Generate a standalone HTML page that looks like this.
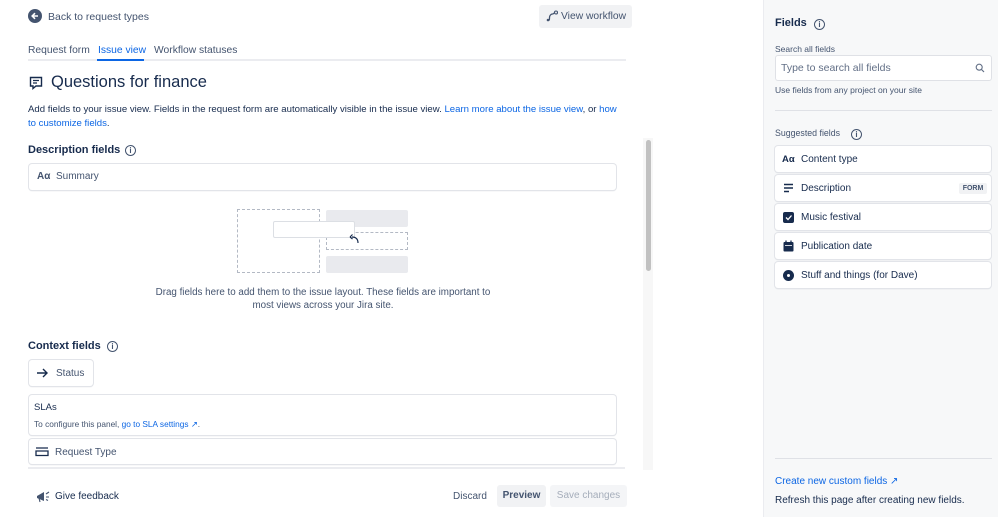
<!DOCTYPE html>
<html><head><meta charset="utf-8"><style>
*{box-sizing:border-box;margin:0;padding:0}
body{width:998px;height:517px;overflow:hidden;background:#fff;font-family:"Liberation Sans",sans-serif;color:#172b4d;position:relative;font-size:11px}
.a{position:absolute;white-space:nowrap}
.link{color:#0c66e4}
.card{position:absolute;background:#fff;border-radius:3px;box-shadow:0 0 0 1px #e2e4e9,0 1px 1px rgba(9,30,66,.2)}
.info{display:inline-block;width:11px;height:11px;border:1.2px solid #44546f;border-radius:50%;font-size:8px;text-align:center;line-height:9px;color:#44546f;font-weight:bold;vertical-align:middle}
</style></head><body>
<!-- header -->
<div class="a" style="left:28px;top:9px;width:14px;height:14px;border-radius:50%;background:#44546f"></div>
<svg class="a" style="left:30px;top:11px" width="10" height="10" viewBox="0 0 10 10"><path d="M8 5H2.5M5 2.2 2.2 5 5 7.8" stroke="#fff" stroke-width="1.6" fill="none"/></svg>
<div class="a" style="left:48px;top:11px;font-size:10.5px;color:#44546f">Back to request types</div>
<div class="a" style="left:539px;top:5px;width:93px;height:23px;background:#f1f2f4;border-radius:3px"></div>
<svg class="a" style="left:546px;top:10px" width="12" height="12" viewBox="0 0 12 12"><path d="M2 10.5c1.5 0 1.5-1 1.5-3S5 4 6.5 4 8 2.5 9 2.5" stroke="#44546f" stroke-width="1.3" fill="none"/><circle cx="2" cy="10" r="1.3" fill="#44546f"/><circle cx="10" cy="2.5" r="1.5" fill="none" stroke="#44546f" stroke-width="1.1"/></svg>
<div class="a" style="left:561px;top:11px;font-size:10.3px;color:#44546f">View workflow</div>
<!-- tabs -->
<div class="a" style="left:28px;top:45px;font-size:10.3px;color:#44546f">Request form</div>
<div class="a" style="left:98px;top:45px;font-size:10.3px;color:#0c66e4">Issue view</div>
<div class="a" style="left:154px;top:45px;font-size:10.3px;color:#44546f">Workflow statuses</div>
<div class="a" style="left:28px;top:59px;width:598px;height:2px;background:#ebecf0"></div>
<div class="a" style="left:97px;top:59px;width:47px;height:2px;background:#0c66e4"></div>
<!-- title -->
<svg class="a" style="left:29px;top:76px" width="14" height="14" viewBox="0 0 14 14"><path d="M1.5 1.5h11v8.5H7l-3 2.5V10H1.5z" stroke="#172b4d" stroke-width="1.4" fill="none"/><path d="M4 4.5h6M4 7h4" stroke="#172b4d" stroke-width="1.3"/></svg>
<div class="a" style="left:51px;top:73px;font-size:16.5px;color:#172b4d">Questions for finance</div>
<div class="a" style="left:28px;top:103px;width:597px;white-space:normal;font-size:9.6px;line-height:13.5px;color:#172b4d">Add fields to your issue view. Fields in the request form are automatically visible in the issue view. <span class="link">Learn more about the issue view</span>, or <span class="link">how to customize fields</span>.</div>
<!-- description -->
<div class="a" style="left:28px;top:144px;font-size:11px;font-weight:bold">Description fields</div>
<div class="a" style="left:125px;top:144px"><span class="info">i</span></div>
<div class="card" style="left:29px;top:164px;width:587px;height:26px"></div>
<div class="a" style="left:37px;top:171px;font-size:10px;font-weight:bold;color:#44546f">Aα</div>
<div class="a" style="left:56px;top:171px;font-size:10px;color:#44546f">Summary</div>
<!-- illustration -->
<div class="a" style="left:237px;top:209px;width:83px;height:64px;border:1px dashed #b3b9c4"></div>
<div class="a" style="left:326px;top:210px;width:82px;height:17px;background:#e9eaee;border-radius:2px"></div>
<div class="a" style="left:326px;top:232px;width:82px;height:18px;border:1px dashed #b3b9c4"></div>
<div class="a" style="left:326px;top:256px;width:82px;height:17px;background:#e9eaee;border-radius:2px"></div>
<div class="a" style="left:273px;top:221px;width:82px;height:17px;background:#fff;border:1px solid #dcdfe4;border-radius:2px"></div>
<svg class="a" style="left:347px;top:231px" width="14" height="14" viewBox="0 0 14 14"><path d="M11 12c0-4-2-6-6-6M3 6l2.5-2.5M3 6l2.5 2" stroke="#172b4d" stroke-width="1.2" fill="none"/></svg>
<div class="a" style="left:150px;top:286px;width:346px;white-space:normal;text-align:center;font-size:9.8px;line-height:13px;color:#44546f">Drag fields here to add them to the issue layout. These fields are important to most views across your Jira site.</div>
<!-- context -->
<div class="a" style="left:28px;top:340px;font-size:11px;font-weight:bold">Context fields</div>
<div class="a" style="left:107px;top:340px"><span class="info">i</span></div>
<div class="card" style="left:29px;top:360px;width:64px;height:26px"></div>
<svg class="a" style="left:36px;top:367px" width="13" height="12" viewBox="0 0 13 12"><path d="M1 6h10M7 2l4 4-4 4" stroke="#172b4d" stroke-width="1.4" fill="none"/></svg>
<div class="a" style="left:56px;top:368px;font-size:10px;color:#44546f">Status</div>
<div class="card" style="left:29px;top:395px;width:587px;height:40px"></div>
<div class="a" style="left:34px;top:402px;font-size:9.5px">SLAs</div>
<div class="a" style="left:34px;top:419px;font-size:8.3px;color:#44546f">To configure this panel, <span class="link">go to SLA settings</span> <span class="link">↗</span>.</div>
<div class="card" style="left:29px;top:439px;width:587px;height:25px"></div>
<svg class="a" style="left:35px;top:446px" width="14" height="11" viewBox="0 0 14 11"><path d="M1 2h12M1 5h12v4.5H1z" stroke="#172b4d" stroke-width="1.3" fill="none"/></svg>
<div class="a" style="left:55px;top:447px;font-size:10px;color:#44546f">Request Type</div>
<div class="a" style="left:28px;top:467px;width:597px;height:2px;background:#ebecf0"></div>
<!-- scrollbar -->
<div class="a" style="left:643px;top:138px;width:10px;height:332px;background:#f7f7f7"></div>
<div class="a" style="left:646px;top:140px;width:5px;height:131px;background:#c1c1c1;border-radius:3px"></div>
<!-- footer -->
<svg class="a" style="left:36px;top:489px" width="15" height="14" viewBox="0 0 15 14"><path d="M1 7l7-4v9L1 9z" fill="#44546f"/><path d="M3 9l1 4M10 5l3-2M10 8h3M10 10.5l2 1" stroke="#44546f" stroke-width="1.1"/></svg>
<div class="a" style="left:55px;top:491px;font-size:10px;color:#172b4d">Give feedback</div>
<div class="a" style="left:453px;top:491px;font-size:10px;color:#44546f">Discard</div>
<div class="a" style="left:497px;top:485px;width:49px;height:22px;background:#f1f2f4;border-radius:3px;font-size:10px;font-weight:bold;color:#44546f;text-align:center;line-height:22px">Preview</div>
<div class="a" style="left:550px;top:485px;width:77px;height:22px;background:#f4f5f7;border-radius:3px;font-size:10px;color:#a5adba;text-align:center;line-height:22px">Save changes</div>
<!-- sidebar -->
<div class="a" style="left:763px;top:0;width:235px;height:517px;background:#f7f8f9;border-left:1px solid #ebecf0"></div>
<div class="a" style="left:775px;top:17px;font-size:11px;font-weight:bold">Fields</div>
<div class="a" style="left:814px;top:18px"><span class="info">i</span></div>
<div class="a" style="left:775px;top:44px;font-size:8.5px;color:#44546f">Search all fields</div>
<div class="a" style="left:775px;top:55px;width:217px;height:26px;background:#fff;border:1px solid #dfe1e6;border-radius:3px"></div>
<div class="a" style="left:781px;top:62px;font-size:10.5px;color:#626f86">Type to search all fields</div>
<svg class="a" style="left:975px;top:63px" width="10" height="10" viewBox="0 0 10 10"><circle cx="4.2" cy="4.2" r="3" stroke="#626f86" stroke-width="1.1" fill="none"/><path d="M6.5 6.5 9 9" stroke="#626f86" stroke-width="1.2"/></svg>
<div class="a" style="left:775px;top:85px;font-size:8.5px;color:#44546f">Use fields from any project on your site</div>
<div class="a" style="left:775px;top:110px;width:217px;height:1px;background:#dfe1e6"></div>
<div class="a" style="left:775px;top:128px;font-size:8.8px;color:#44546f">Suggested fields</div>
<div class="a" style="left:851px;top:128px"><span class="info">i</span></div>
<div class="card" style="left:775px;top:146px;width:216px;height:26px"></div>
<div class="a" style="left:782px;top:154px;font-size:9.5px;font-weight:bold">Aα</div>
<div class="a" style="left:801px;top:154px;font-size:10px">Content type</div>
<div class="card" style="left:775px;top:175px;width:216px;height:26px"></div>
<svg class="a" style="left:783px;top:183px" width="11" height="10" viewBox="0 0 11 10"><path d="M1 1.5h9M1 5h9M1 8.5h5" stroke="#172b4d" stroke-width="1.4"/></svg>
<div class="a" style="left:801px;top:183px;font-size:10px">Description</div>
<div class="a" style="left:959px;top:183px;width:28px;height:11px;background:#f1f2f4;border-radius:2px;font-size:7px;font-weight:bold;color:#44546f;text-align:center;line-height:11px">FORM</div>
<div class="card" style="left:775px;top:204px;width:216px;height:26px"></div>
<div class="a" style="left:783px;top:212px;width:11px;height:11px;background:#172b4d;border-radius:2px"></div>
<svg class="a" style="left:783px;top:212px" width="11" height="11" viewBox="0 0 11 11"><path d="M3 5.5l2 2 3.5-4" stroke="#fff" stroke-width="1.3" fill="none"/></svg>
<div class="a" style="left:801px;top:212px;font-size:10px">Music festival</div>
<div class="card" style="left:775px;top:233px;width:216px;height:26px"></div>
<svg class="a" style="left:783px;top:240px" width="11" height="12" viewBox="0 0 11 12"><rect x="0.5" y="2" width="10" height="9.5" rx="1" fill="#172b4d"/><path d="M3 0.5v3M8 0.5v3" stroke="#172b4d" stroke-width="1.3"/><path d="M2 5.5h7" stroke="#fff" stroke-width=".8"/></svg>
<div class="a" style="left:801px;top:241px;font-size:10px">Publication date</div>
<div class="card" style="left:775px;top:262px;width:216px;height:26px"></div>
<div class="a" style="left:783px;top:270px;width:11px;height:11px;background:#172b4d;border-radius:50%"></div>
<div class="a" style="left:787px;top:274px;width:3px;height:3px;background:#fff;border-radius:50%"></div>
<div class="a" style="left:801px;top:270px;font-size:10px">Stuff and things (for Dave)</div>
<div class="a" style="left:775px;top:458px;width:217px;height:1px;background:#dfe1e6"></div>
<div class="a" style="left:775px;top:476px;font-size:10px;color:#0c66e4">Create new custom fields ↗</div>
<div class="a" style="left:775px;top:495px;font-size:10px;color:#172b4d">Refresh this page after creating new fields.</div>
</body></html>
